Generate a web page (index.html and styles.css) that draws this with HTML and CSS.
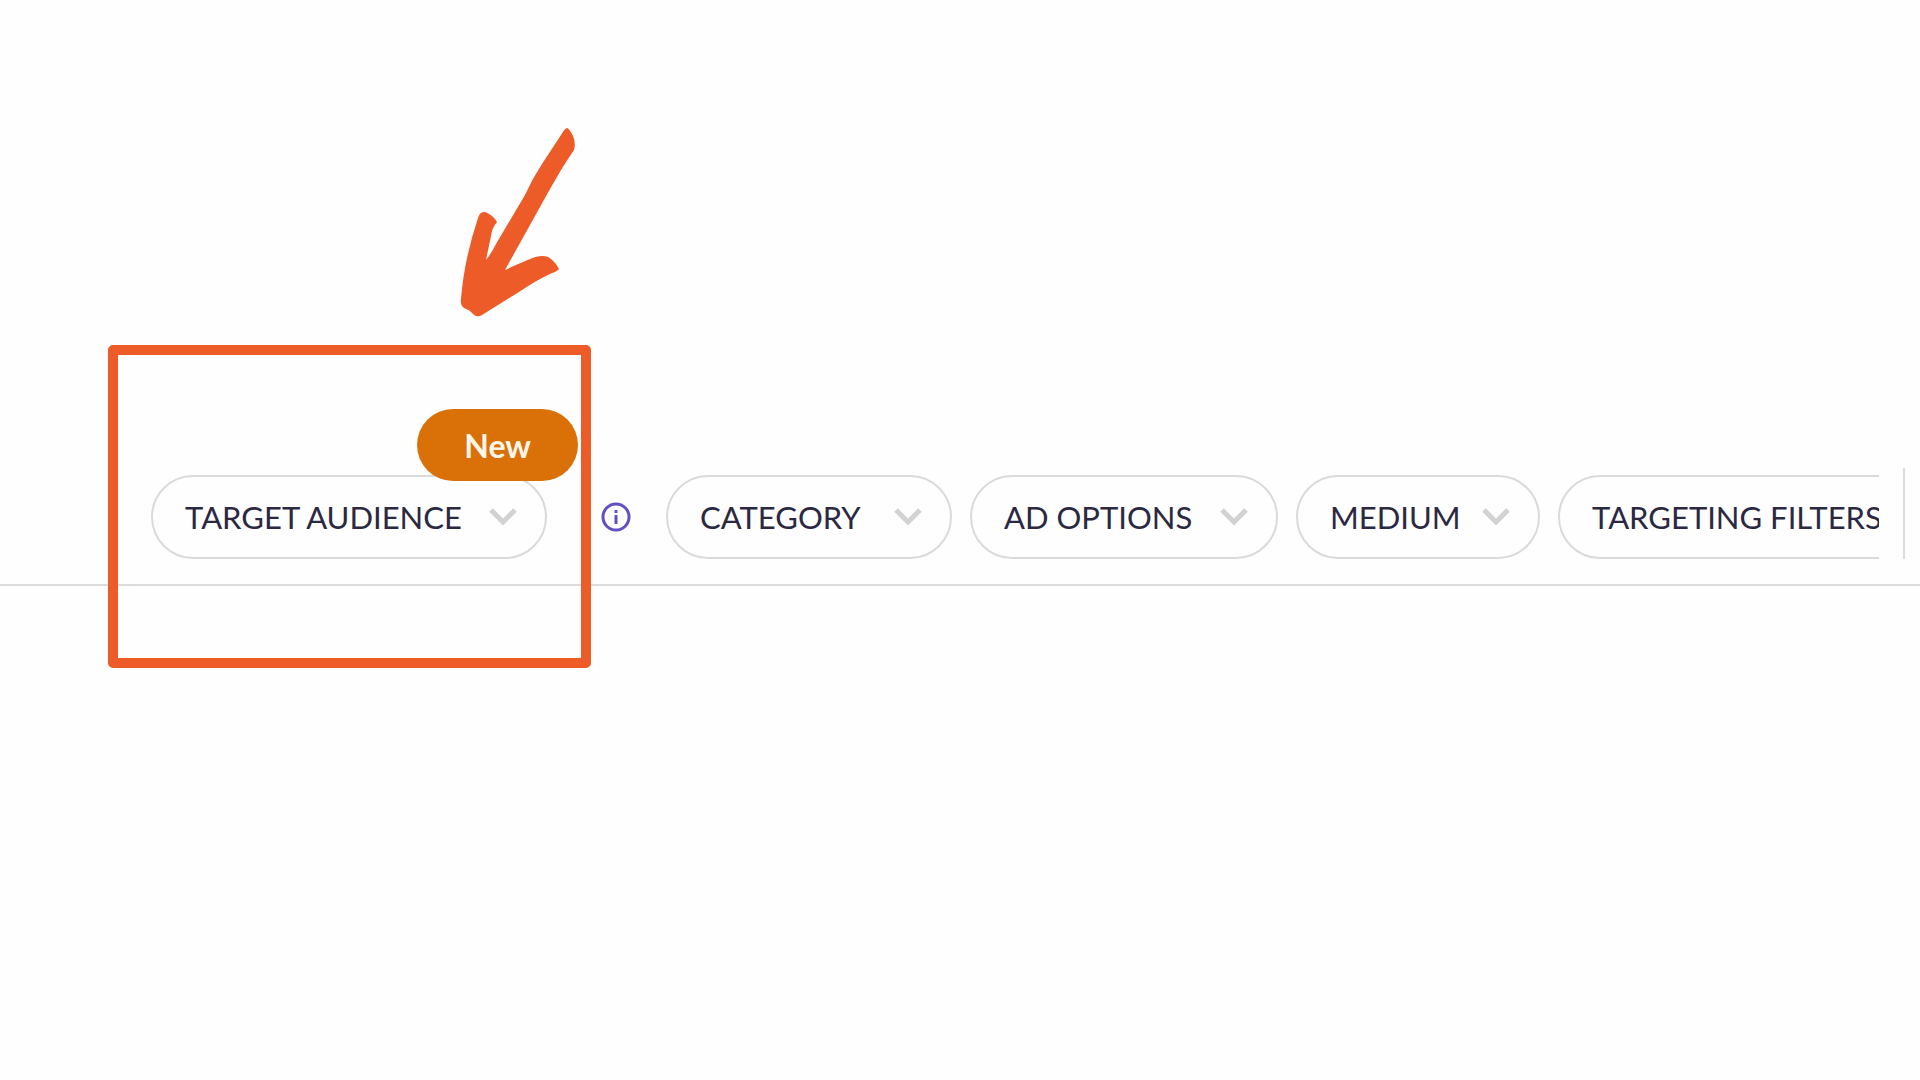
FILE: index.html
```
<!DOCTYPE html>
<html lang="en">
    <head>
        <meta charset="UTF-8" />
        <meta name="viewport" content="width=device-width, initial-scale=1.0" />
        <title>Filters</title>
        <link rel="stylesheet" href="styles.css">
    </head>
    <body>
        <header class="filter-bar">
            <div class="filters">
                <div class="filter-group">
                    <button type="button" class="filter filter-audience">
                        TARGET AUDIENCE
                        <svg class="chevron" viewBox="0 0 28 18"><path d="M2 2l12 12L26 2" /></svg>
                    </button>
                    <span class="badge">New</span>
                    <div class="highlight"></div>
                    <svg class="arrow" viewBox="0 0 160 220">
                        <path d="M127 18Q129 18 133 26Q136 33 134 40L126 52Q116 68 105 88L65 160Q78 154 90 149Q101 144 108 147Q115 151 119 159Q118 161 110 164Q95 171 79 182L42 205Q37 208 33 204Q30 200 24 198Q20 195 21 189Q24 150 38 108Q40 101 45 102Q53 105 57 112Q52 118 51 126L46 150Q51 144 56 134L85 85Q92 69 102 54L121 25Q125 18 127 18Z" />
                    </svg>
                </div>
                <button type="button" class="info" aria-label="About target audience">
                    <svg viewBox="0 0 30 30">
                        <circle cx="15" cy="15" r="13" />
                        <path d="M15 13v9M15 8v3" />
                    </svg>
                </button>
                <button type="button" class="filter filter-category">
                    CATEGORY
                    <svg class="chevron" viewBox="0 0 28 18"><path d="M2 2l12 12L26 2" /></svg>
                </button>
                <button type="button" class="filter filter-options">
                    AD OPTIONS
                    <svg class="chevron" viewBox="0 0 28 18"><path d="M2 2l12 12L26 2" /></svg>
                </button>
                <button type="button" class="filter filter-medium">
                    MEDIUM
                    <svg class="chevron" viewBox="0 0 28 18"><path d="M2 2l12 12L26 2" /></svg>
                </button>
                <button type="button" class="filter">
                    TARGETING FILTERS
                    <svg class="chevron" viewBox="0 0 28 18"><path d="M2 2l12 12L26 2" /></svg>
                </button>
            </div>
            <div class="divider"></div>
        </header>
    </body>
</html>
```
FILE: styles.css
```
* {
    box-sizing: border-box;
}
body {
    min-height: 100vh;
    margin: 0;
    background-color: #fefefe;
    font-family: Lato, 'Liberation Sans', sans-serif;
}
.filter-bar {
    display: flex;
    align-items: flex-end;
    padding: 468px 15px 25px 0;
    border-bottom: 2px solid #dcdcdc;
}
.filters {
    display: flex;
    flex: 1;
    align-items: center;
    gap: 18px;
    min-width: 0;
    padding-left: 151px;
    overflow-x: clip;
}
.filter-group {
    position: relative;
    flex-shrink: 0;
}
.filter {
    display: flex;
    flex-shrink: 0;
    align-items: center;
    justify-content: space-between;
    gap: 20px;
    height: 84px;
    padding: 0 28px 0 32px;
    border: 2px solid #dadada;
    border-radius: 42px;
    background-color: transparent;
    color: #2b2842;
    font-family: inherit;
    font-size: 31px;
    white-space: nowrap;
    cursor: pointer;
}
.filter-audience {
    width: 396px;
}
.filter-category {
    width: 286px;
}
.filter-options {
    width: 308px;
}
.filter-medium {
    width: 244px;
}
.chevron {
    width: 28px;
    height: 18px;
    fill: none;
    stroke: #d2d2d2;
    stroke-width: 5;
}
.badge {
    position: absolute;
    top: -66px;
    right: -31px;
    padding: 17px 47px 15px;
    border-radius: 37px;
    background-color: #d97108;
    color: #fff6ea;
    font-size: 32px;
    font-weight: 700;
    line-height: 40px;
}
.highlight {
    position: absolute;
    top: -130px;
    right: -44px;
    bottom: -109px;
    left: -43px;
    border: 10px solid #ed5b28;
    border-radius: 5px;
    pointer-events: none;
}
.arrow {
    position: absolute;
    top: -365px;
    right: -53px;
    width: 160px;
    height: 220px;
    fill: #ed5b28;
}
.info {
    flex-shrink: 0;
    width: 30px;
    height: 30px;
    margin: 0 17px 0 36px;
    padding: 0;
    border: 0;
    background: none;
    cursor: pointer;
}
.info svg {
    display: block;
    fill: none;
    stroke: #6250c4;
    stroke-width: 3;
}
.divider {
    width: 2px;
    height: 91px;
    margin-left: 24px;
    background-color: #dcdcdc;
}
```
